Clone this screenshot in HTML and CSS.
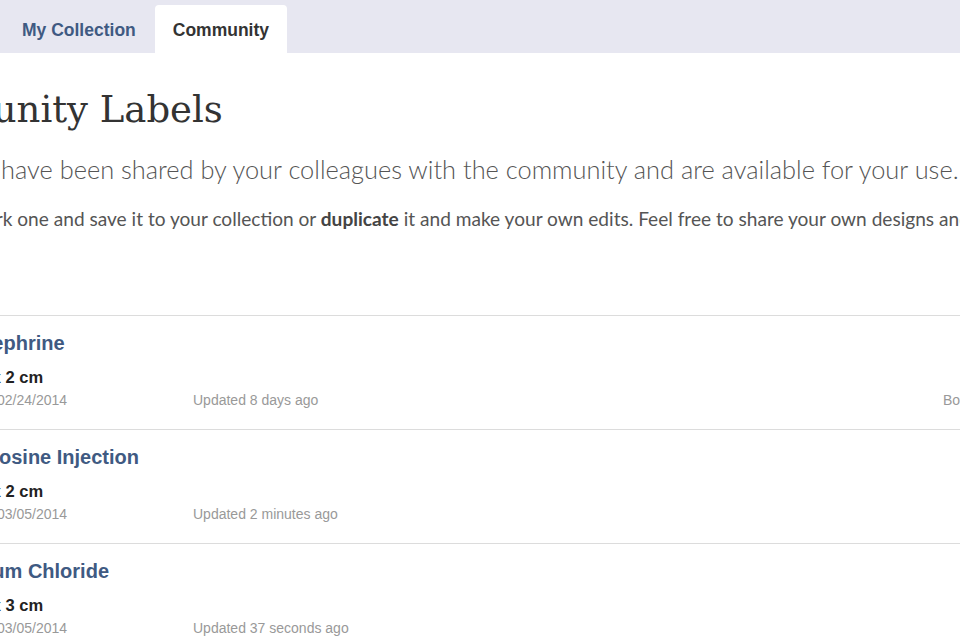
FILE: index.html
```html
<!DOCTYPE html>
<html>
<head>
<meta charset="utf-8">
<link rel="stylesheet" href="styles.css">
</head>
<body>
<nav class="tabbar">
  <a class="tab">My Collection</a>
  <a class="tab active">Community</a>
</nav>
<main class="page">
  <h1 class="title">Community Labels</h1>
  <p class="lead">These labels have been shared by your colleagues with the community and are available for your use.</p>
  <p class="sub">Bookmark one and save it to your collection or <b>duplicate</b> it and make your own edits. Feel free to share your own designs and templates too.</p>
  <ul class="list">
    <li class="row">
      <div class="name">Epinephrine</div>
      <div class="dims">2 x 2 cm</div>
      <div class="meta"><span class="date">02/24/2014</span><span class="upd">Updated 8 days ago</span><span class="btn">Bookmark</span></div>
    </li>
    <li class="row">
      <div class="name">Adenosine Injection</div>
      <div class="dims">2 x 2 cm</div>
      <div class="meta"><span class="date">03/05/2014</span><span class="upd">Updated 2 minutes ago</span></div>
    </li>
    <li class="row">
      <div class="name">Sodium Chloride</div>
      <div class="dims">3 x 3 cm</div>
      <div class="meta"><span class="date">03/05/2014</span><span class="upd">Updated 37 seconds ago</span></div>
    </li>
  </ul>
</main>
</body>
</html>
```
FILE: styles.css
```css
html, body { margin: 0; padding: 0; background: #fff; overflow: hidden; }
body { width: 960px; height: 640px; font-family: "Liberation Sans", Arial, sans-serif; }

.tabbar {
  height: 53px;
  background: #e7e7f1;
  display: flex;
  align-items: flex-end;
  padding-left: 4px;
  box-sizing: border-box;
}
.tab {
  font-size: 17.5px;
  font-weight: bold;
  color: #3f5a82;
  padding: 0 18px;
  height: 48px;
  line-height: 50px;
  border-radius: 4px 4px 0 0;
}
.tab.active { background: #fff; color: #333; margin-left: 1px; }

.page { white-space: nowrap; }

.title {
  font-family: "DejaVu Serif", serif;
  font-weight: normal;
  font-size: 37px;
  color: #333;
  margin: 34px 0 0 -128px;
  line-height: 46px;
}
.lead {
  font-family: "Lato", sans-serif;
  font-weight: 300;
  font-size: 25.4px;
  color: #555;
  margin: 21px 0 0 -140px;
  line-height: 30px;
}
.sub {
  font-family: "Lato", sans-serif;
  font-size: 19.1px;
  color: #555;
  margin: 23px 0 0 -73px;
  line-height: 24px;
}
.sub b { color: #444; }

.list { list-style: none; margin: 84px 0 0 -60px; padding: 0; width: 1100px; }
.row { border-top: 1px solid #dcdcdc; padding: 15px 0 20px; }
.name { font-size: 20px; font-weight: bold; color: #3f5a82; line-height: 24px; margin-left: 9px; }
.dims { font-size: 16.5px; font-weight: bold; color: #222; line-height: 20px; margin-top: 12px; margin-left: 38px; }
.meta { display: flex; font-size: 14px; color: #999; line-height: 18px; margin-top: 4px; }
.date { width: 196px; margin-left: 57px; }
.btn { margin-left: auto; margin-right: 34px; }
```
